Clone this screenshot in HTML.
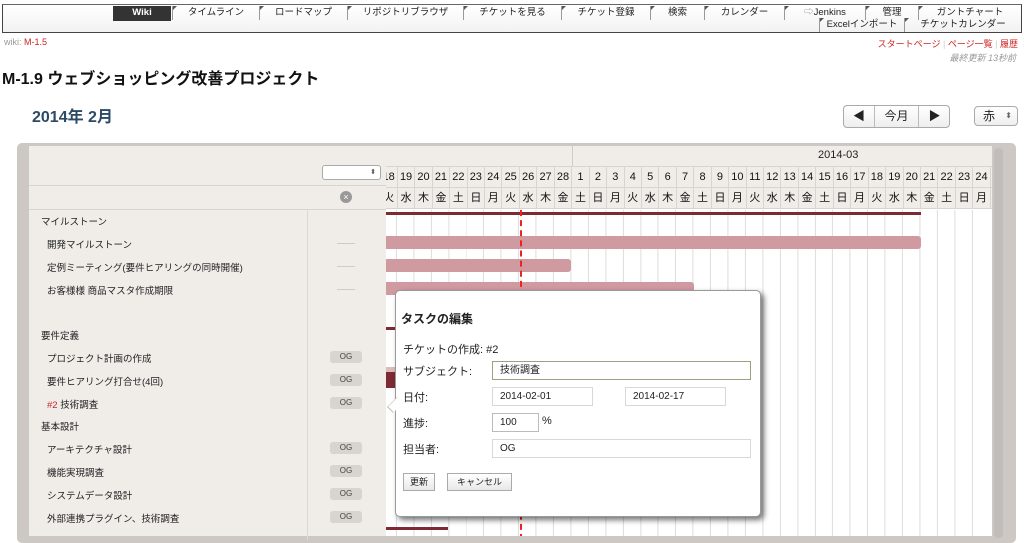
<!DOCTYPE html>
<html><head><meta charset="utf-8">
<style>
*{margin:0;padding:0;box-sizing:border-box}
body{width:1024px;height:532px;overflow:hidden;background:#fff;font-family:"Liberation Sans","Noto Sans CJK JP",sans-serif;color:#222;position:relative}
.a{position:absolute;white-space:nowrap}
#nav{position:absolute;left:2px;top:4px;width:1020px;height:29px;border:1px solid #444;border-top:1px solid #666;background:linear-gradient(#fff,#f2f2f2)}
.t{position:absolute;height:14px;font-size:9.5px;text-align:center;line-height:14px;border-left:1px solid #999;color:#222}
.t:before{content:"";position:absolute;left:0;top:0;border-top:4px solid #555;border-right:4px solid transparent}
.w{background:#333;color:#fff;font-weight:bold;border:none}
.w:before{display:none}
.lst{font-size:9.5px;color:#222}
.og{position:absolute;left:330px;width:32px;height:12px;background:#d8d4d0;border-radius:3px;font-size:8px;text-align:center;line-height:12px;color:#444}
.bar{position:absolute;background:#cf9aa0;border-radius:3px}
.inp{position:absolute;border:1px solid #d8d8d8;background:#fff;font-size:10px;padding-left:7px;line-height:17px;height:19px}
.lb{font-size:11px;color:#222}
.dn{display:flex;position:absolute;left:0;font-size:11px;color:#111}
.dn span{width:17.45px;text-align:center;border-right:1px solid #d8d4d0;flex:none}
</style></head><body>
<div id="nav">
<div class="t w" style="left:110px;top:1px;width:58px;height:15px">Wiki</div>
<div class="t" style="left:169px;top:1px;width:87px">タイムライン</div>
<div class="t" style="left:256px;top:1px;width:88px">ロードマップ</div>
<div class="t" style="left:344px;top:1px;width:116px">リポジトリブラウザ</div>
<div class="t" style="left:460px;top:1px;width:98px">チケットを見る</div>
<div class="t" style="left:558px;top:1px;width:89px">チケット登録</div>
<div class="t" style="left:647px;top:1px;width:54px">検索</div>
<div class="t" style="left:701px;top:1px;width:80px">カレンダー</div>
<div class="t" style="left:781px;top:1px;width:81px"><span style="color:#999">⇨</span>Jenkins</div>
<div class="t" style="left:862px;top:1px;width:53px">管理</div>
<div class="t" style="left:915px;top:1px;width:103px">ガントチャート</div>
<div class="t" style="left:816px;top:13px;width:85px">Excelインポート</div>
<div class="t" style="left:901px;top:13px;width:117px">チケットカレンダー</div>
</div>
<div class="a" style="left:4px;top:37px;font-size:9px;color:#999">wiki: <span style="color:#c22">M-1.5</span></div>
<div class="a" style="right:6px;top:37px;font-size:9px;color:#c22">スタートページ <span style="color:#ccc">|</span> ページ一覧 <span style="color:#ccc">|</span> 履歴</div>
<div class="a" style="right:8px;top:51px;font-size:9px;color:#999;font-style:italic">最終更新 13秒前</div>
<div class="a" style="left:2px;top:65px;font-size:16px;font-weight:bold;color:#111">M-1.9 ウェブショッピング改善プロジェクト</div>
<div class="a" style="left:32px;top:103px;font-size:16px;font-weight:bold;color:#2c4a66">2014年 2月</div>
<div class="a" style="left:843px;top:105px;width:107px;height:23px;border:1px solid #aaa;border-radius:4px;background:linear-gradient(#fff,#eee);font-size:12px">
<span class="a" style="left:0;width:31px;text-align:center;line-height:21px;border-right:1px solid #bbb">◀</span>
<span class="a" style="left:31px;width:44px;text-align:center;line-height:21px;border-right:1px solid #bbb">今月</span>
<span class="a" style="left:75px;width:31px;text-align:center;line-height:21px">▶</span></div>
<div class="a" style="left:974px;top:106px;width:44px;height:20px;border:1px solid #aaa;border-radius:4px;background:linear-gradient(#fff,#eee);font-size:12px;line-height:18px;padding-left:8px">赤 <span style="font-size:8px;color:#666;position:absolute;right:5px">⬍</span></div>

<div class="a" style="left:17px;top:143px;width:999px;height:400px;background:#cdc8c3;border-radius:5px"></div>
<div class="a" style="left:29px;top:146px;width:357px;height:390px;background:#f0ede9"></div>
<div class="a" style="left:29px;top:185px;width:357px;height:1px;background:#d8d4d0"></div>
<div class="a" style="left:29px;top:209px;width:357px;height:1px;background:#d8d4d0"></div>
<div class="a" style="left:307px;top:210px;width:1px;height:330px;background:#ddd8d3"></div>
<div class="a" style="left:322px;top:165px;width:59px;height:15px;border:1px solid #aaa;border-radius:3px;background:#fff;font-size:7px;text-align:right;padding-right:4px;color:#555;line-height:13px">⬍</div>
<div class="a" style="left:340px;top:191px;width:12px;height:12px;border-radius:6px;background:#999;color:#fff;font-size:9px;text-align:center;line-height:12px">×</div>

<div class="a lst" style="left:41px;top:214px">マイルストーン</div>
<div class="a lst" style="left:47px;top:237px">開発マイルストーン</div>
<div class="a lst" style="left:47px;top:260px">定例ミーティング(要件ヒアリングの同時開催)</div>
<div class="a lst" style="left:47px;top:283px">お客様様 商品マスタ作成期限</div>
<div class="a" style="left:337px;top:243px;width:18px;height:1px;background:#ccc"></div>
<div class="a" style="left:337px;top:266px;width:18px;height:1px;background:#ccc"></div>
<div class="a" style="left:337px;top:289px;width:18px;height:1px;background:#ccc"></div>
<div class="a lst" style="left:41px;top:328px">要件定義</div>
<div class="a lst" style="left:47px;top:351px">プロジェクト計画の作成</div>
<div class="a lst" style="left:47px;top:374px">要件ヒアリング打合せ(4回)</div>
<div class="a lst" style="left:47px;top:397px"><span style="color:#c22">#2</span> 技術調査</div>
<div class="a lst" style="left:41px;top:419px">基本設計</div>
<div class="a lst" style="left:47px;top:442px">アーキテクチャ設計</div>
<div class="a lst" style="left:47px;top:465px">機能実現調査</div>
<div class="a lst" style="left:47px;top:488px">システムデータ設計</div>
<div class="a lst" style="left:47px;top:511px">外部連携プラグイン、技術調査</div>
<div class="og" style="top:351px">OG</div>
<div class="og" style="top:374px">OG</div>
<div class="og" style="top:397px">OG</div>
<div class="og" style="top:442px">OG</div>
<div class="og" style="top:465px">OG</div>
<div class="og" style="top:488px">OG</div>
<div class="og" style="top:511px">OG</div>

<div class="a" style="left:386px;top:146px;width:606px;height:390px;overflow:hidden;background:#fff">
<div class="a" style="left:0;top:0;width:606px;height:63px;background:#f0ede9;border-bottom:1px solid #d8d4d0"></div>
<div class="a" style="left:186px;top:0;width:1px;height:20px;background:#d0ccc8"></div>
<div class="a" style="left:0;top:20px;width:606px;height:1px;background:#d8d4d0"></div>
<div class="a" style="left:0;top:41px;width:606px;height:1px;background:#d8d4d0"></div>
<div class="a" style="left:432px;top:3px;font-size:11px">2014-03</div>
<div class="a" style="left:0;top:64px;width:606px;height:330px;background:repeating-linear-gradient(90deg,transparent 0,transparent 16.45px,#ddd 16.45px,#ddd 17.45px);background-position:-6.6px 0"></div>
<div style="position:absolute;left:-5.6px;top:0;width:700px">
<div class="dn" style="top:21px;height:20px;line-height:20px"><span>18</span><span>19</span><span>20</span><span>21</span><span>22</span><span>23</span><span>24</span><span>25</span><span>26</span><span>27</span><span>28</span><span>1</span><span>2</span><span>3</span><span>4</span><span>5</span><span>6</span><span>7</span><span>8</span><span>9</span><span>10</span><span>11</span><span>12</span><span>13</span><span>14</span><span>15</span><span>16</span><span>17</span><span>18</span><span>19</span><span>20</span><span>21</span><span>22</span><span>23</span><span>24</span></div>
<div class="dn" style="top:42px;height:21px;line-height:21px"><span>火</span><span>水</span><span>木</span><span>金</span><span>土</span><span>日</span><span>月</span><span>火</span><span>水</span><span>木</span><span>金</span><span>土</span><span>日</span><span>月</span><span>火</span><span>水</span><span>木</span><span>金</span><span>土</span><span>日</span><span>月</span><span>火</span><span>水</span><span>木</span><span>金</span><span>土</span><span>日</span><span>月</span><span>火</span><span>水</span><span>木</span><span>金</span><span>土</span><span>日</span><span>月</span></div>
</div>
<div class="a" style="left:0;top:66px;width:535px;height:3px;background:#7d2a35"></div>
<div class="bar" style="left:-4px;top:90px;width:539px;height:13px"></div>
<div class="bar" style="left:-4px;top:113px;width:189px;height:13px"></div>
<div class="bar" style="left:-4px;top:136px;width:312px;height:13px"></div>
<div class="a" style="left:0;top:181px;width:30px;height:3px;background:#7d2a35"></div>
<div class="a" style="left:0;top:221px;width:20px;height:5px;background:#dbb"></div>
<div class="a" style="left:0;top:226px;width:20px;height:16px;background:#7d2a35"></div>
<div class="a" style="left:0;top:381px;width:62px;height:3px;background:#7d2a35"></div>
<div class="a" style="left:133.5px;top:64px;width:0;height:330px;border-left:2px dashed #e22"></div>
</div>
<div class="a" style="left:994px;top:148px;width:9px;height:390px;background:#c0bdba;border-radius:4px"></div>

<div class="a" style="left:395px;top:290px;width:366px;height:227px;background:#fff;border:1px solid #999;border-radius:5px;box-shadow:3px 3px 6px rgba(0,0,0,.55)">
<div class="a" style="left:-8px;top:107px;width:14px;height:14px;background:#fff;border-left:1px solid #bbb;border-bottom:1px solid #bbb;transform:rotate(45deg) scaleX(.6)"></div>
<div class="a" style="left:5px;top:19px;font-size:12px;font-weight:bold">タスクの編集</div>
<div class="a lb" style="left:7px;top:50px">チケットの作成: #2</div>
<div class="a lb" style="left:7px;top:72px">サブジェクト:</div>
<div class="inp" style="left:96px;top:70px;width:259px;border-color:#a0a080">技術調査</div>
<div class="a lb" style="left:7px;top:98px">日付:</div>
<div class="inp" style="left:96px;top:96px;width:101px">2014-02-01</div>
<div class="inp" style="left:229px;top:96px;width:101px">2014-02-17</div>
<div class="a lb" style="left:7px;top:124px">進捗:</div>
<div class="inp" style="left:96px;top:122px;width:47px;border-color:#bbb">100</div>
<div class="a lb" style="left:146px;top:124px">%</div>
<div class="a lb" style="left:7px;top:150px">担当者:</div>
<div class="inp" style="left:96px;top:148px;width:259px">OG</div>
<div class="a" style="left:7px;top:182px;width:32px;height:18px;border:1px solid #aaa;background:linear-gradient(#fff,#e8e8e8);font-size:9px;text-align:center;line-height:16px">更新</div>
<div class="a" style="left:51px;top:182px;width:65px;height:18px;border:1px solid #aaa;background:linear-gradient(#fff,#e8e8e8);font-size:9px;text-align:center;line-height:16px">キャンセル</div>
</div>
</body></html>
